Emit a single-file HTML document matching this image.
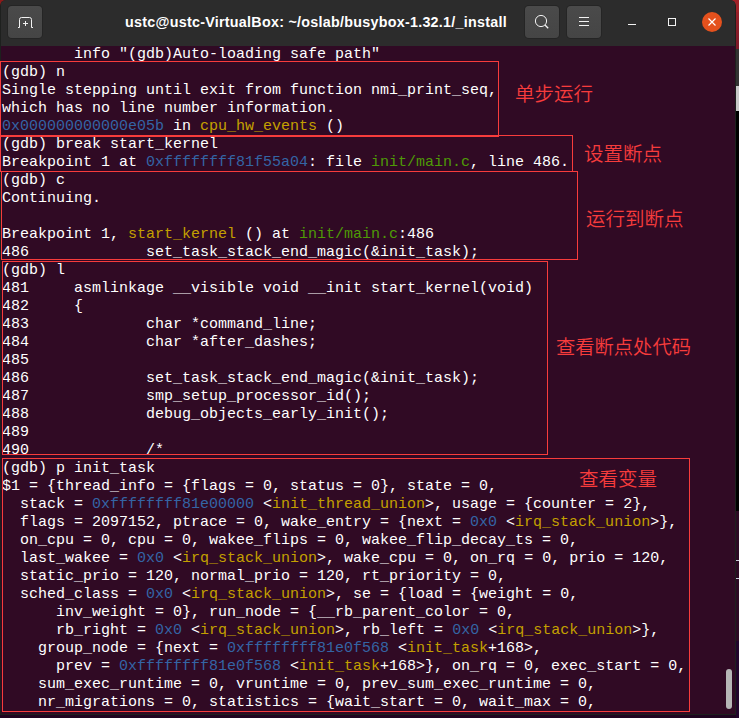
<!DOCTYPE html>
<html lang="zh"><head><meta charset="utf-8"><title>ustc@ustc-VirtualBox: ~/oslab/busybox-1.32.1/_install</title>
<style>
html,body{margin:0;padding:0;}
body{width:739px;height:718px;overflow:hidden;position:relative;background:#1e0420;font-family:"Liberation Sans","Noto Sans CJK SC",sans-serif;}
#strip{position:absolute;left:736px;top:0;width:3px;height:718px;background:#000;}
#strip i{position:absolute;left:0;width:3px;display:block;}
#win{position:absolute;left:0;top:0;width:736px;height:715px;background:#1e201e;border-radius:6px 6px 0 0;overflow:hidden;}
#tl{position:absolute;left:0;top:0;width:12px;height:12px;background:#8c1a1a;}
#tr{position:absolute;left:724px;top:0;width:15px;height:12px;background:#a02229;}
#hdr{position:absolute;left:1px;top:0;width:734px;height:46px;background:#2c2c2c;}
.btn{position:absolute;background:linear-gradient(#4a4a4a,#454545);border-radius:4px;box-shadow:0 0 0 1px #252525;}
#title{position:absolute;left:0;top:0;width:632px;height:44px;line-height:44px;text-align:center;color:#fff;font-weight:bold;font-size:14.3px;letter-spacing:0.27px;white-space:nowrap;}
#term{position:absolute;left:1px;top:46px;width:734px;height:668px;background:#300a24;overflow:hidden;}
.l{position:absolute;left:1px;height:18px;line-height:18px;white-space:pre;color:#fff;font-family:"Liberation Mono","DejaVu Sans Mono",monospace;font-size:15px;}
.b{color:#3465a4;}
.y{color:#c4a000;}
.g{color:#4e9a06;}
.box{position:absolute;border:1px solid #f73c3c;box-sizing:border-box;}
.cn{position:absolute;color:#f73c3c;font-weight:350;font-family:"Liberation Sans","Noto Sans CJK SC",sans-serif;font-size:19.5px;line-height:24px;white-space:nowrap;}
#sb{position:absolute;left:725px;top:623px;width:6px;height:40px;background:#b6b6b6;border-radius:3px;}
svg{position:absolute;overflow:visible;}
#ov{position:absolute;left:0;top:0;width:736px;height:715px;}
#hin{position:absolute;left:-1px;top:0;width:736px;height:46px;}
</style></head>
<body>
<div id="strip"><i style="top:0;height:49px;background:linear-gradient(#a02229,#7c1a2a)"></i><i style="top:49px;height:37px;background:#333"></i><i style="top:86px;height:25px;background:#c8c8c8"></i><i style="top:111px;height:400px;background:#000"></i><i style="top:511px;height:130px;background:#2d0a24"></i><i style="top:560px;height:1px;background:#c8c8d8"></i><i style="top:578px;height:1px;background:#c8c8d8"></i><i style="top:641px;height:77px;background:#22052c"></i></div>
<div id="tl"></div><div id="tr"></div>
<div id="win">
<div id="hdr"><div id="hin">
<div class="btn" style="left:8px;top:6px;width:34px;height:32px"></div>
<svg style="left:0;top:0" width="736" height="46" viewBox="0 0 736 46" fill="none" stroke="#f2f2f2" stroke-width="1">
<path d="M18 27.5 H19.5 V19.5 Q19.5 17.5 21.5 17.5 H29.5 Q31.5 17.5 31.5 19.5 V27.5 H33"/>
<path d="M23 23.5 H28 M25.5 21 V26"/>
</svg>
<div id="title">ustc@ustc-VirtualBox: ~/oslab/busybox-1.32.1/_install</div>
<div class="btn" style="left:525px;top:6px;width:34px;height:32px"></div>
<div class="btn" style="left:567px;top:6px;width:34px;height:32px"></div>
<svg style="left:0;top:0" width="736" height="46" viewBox="0 0 736 46" fill="none" stroke="#f2f2f2" stroke-width="1">
<circle cx="541" cy="21" r="5.6"/>
<path d="M545 25 L548.2 28.2" stroke-width="1.3"/>
<path d="M579 17.5 H589 M579 21.5 H589 M579 25.5 H589"/>
<path d="M628 24.5 H636"/>
<rect x="668.5" y="18.5" width="7" height="7"/>
</svg>
<div style="position:absolute;left:702px;top:12px;width:20px;height:20px;border-radius:50%;background:#e4511d"></div>
<svg style="left:0;top:0" width="736" height="46" viewBox="0 0 736 46" fill="none" stroke="#fff" stroke-width="1.2">
<path d="M708.5 18.5 L715.5 25.5 M715.5 18.5 L708.5 25.5"/>
</svg>
</div></div>
<div id="term">
<div class="l" style="top:0px">        info "(gdb)Auto-loading safe path"</div>
<div class="l" style="top:18px">(gdb) n</div>
<div class="l" style="top:36px">Single stepping until exit from function nmi_print_seq,</div>
<div class="l" style="top:54px">which has no line number information.</div>
<div class="l" style="top:72px"><span class="b">0x000000000000e05b</span> in <span class="y">cpu_hw_events</span> ()</div>
<div class="l" style="top:90px">(gdb) break start_kernel</div>
<div class="l" style="top:108px">Breakpoint 1 at <span class="b">0xffffffff81f55a04</span>: file <span class="g">init/main.c</span>, line 486.</div>
<div class="l" style="top:126px">(gdb) c</div>
<div class="l" style="top:144px">Continuing.</div>
<div class="l" style="top:162px"></div>
<div class="l" style="top:180px">Breakpoint 1, <span class="y">start_kernel</span> () at <span class="g">init/main.c</span>:486</div>
<div class="l" style="top:198px">486             set_task_stack_end_magic(&amp;init_task);</div>
<div class="l" style="top:216px">(gdb) l</div>
<div class="l" style="top:234px">481     asmlinkage __visible void __init start_kernel(void)</div>
<div class="l" style="top:252px">482     {</div>
<div class="l" style="top:270px">483             char *command_line;</div>
<div class="l" style="top:288px">484             char *after_dashes;</div>
<div class="l" style="top:306px">485</div>
<div class="l" style="top:324px">486             set_task_stack_end_magic(&amp;init_task);</div>
<div class="l" style="top:342px">487             smp_setup_processor_id();</div>
<div class="l" style="top:360px">488             debug_objects_early_init();</div>
<div class="l" style="top:378px">489</div>
<div class="l" style="top:396px">490             /*</div>
<div class="l" style="top:414px">(gdb) p init_task</div>
<div class="l" style="top:432px">$1 = {thread_info = {flags = 0, status = 0}, state = 0,</div>
<div class="l" style="top:450px">  stack = <span class="b">0xffffffff81e00000</span> &lt;<span class="y">init_thread_union</span>&gt;, usage = {counter = 2},</div>
<div class="l" style="top:468px">  flags = 2097152, ptrace = 0, wake_entry = {next = <span class="b">0x0</span> &lt;<span class="y">irq_stack_union</span>&gt;},</div>
<div class="l" style="top:486px">  on_cpu = 0, cpu = 0, wakee_flips = 0, wakee_flip_decay_ts = 0,</div>
<div class="l" style="top:504px">  last_wakee = <span class="b">0x0</span> &lt;<span class="y">irq_stack_union</span>&gt;, wake_cpu = 0, on_rq = 0, prio = 120,</div>
<div class="l" style="top:522px">  static_prio = 120, normal_prio = 120, rt_priority = 0,</div>
<div class="l" style="top:540px">  sched_class = <span class="b">0x0</span> &lt;<span class="y">irq_stack_union</span>&gt;, se = {load = {weight = 0,</div>
<div class="l" style="top:558px">      inv_weight = 0}, run_node = {__rb_parent_color = 0,</div>
<div class="l" style="top:576px">      rb_right = <span class="b">0x0</span> &lt;<span class="y">irq_stack_union</span>&gt;, rb_left = <span class="b">0x0</span> &lt;<span class="y">irq_stack_union</span>&gt;},</div>
<div class="l" style="top:594px">    group_node = {next = <span class="b">0xffffffff81e0f568</span> &lt;<span class="y">init_task</span>+168&gt;,</div>
<div class="l" style="top:612px">      prev = <span class="b">0xffffffff81e0f568</span> &lt;<span class="y">init_task</span>+168&gt;}, on_rq = 0, exec_start = 0,</div>
<div class="l" style="top:630px">    sum_exec_runtime = 0, vruntime = 0, prev_sum_exec_runtime = 0,</div>
<div class="l" style="top:648px">    nr_migrations = 0, statistics = {wait_start = 0, wait_max = 0,</div>

<div id="sb"></div>
</div>
<div id="ov">
<div class="box" style="left:0px;top:61px;width:499px;height:76px"></div>
<div class="box" style="left:0px;top:135px;width:573px;height:37px"></div>
<div class="box" style="left:1px;top:171px;width:577px;height:89px"></div>
<div class="box" style="left:2px;top:261px;width:546px;height:194px"></div>
<div class="box" style="left:2px;top:458px;width:688px;height:254px"></div>
<div class="cn" style="left:515px;top:82px">单步运行</div>
<div class="cn" style="left:584px;top:142px">设置断点</div>
<div class="cn" style="left:586px;top:207px">运行到断点</div>
<div class="cn" style="left:556px;top:336px;font-size:19.3px">查看断点处代码</div>
<div class="cn" style="left:579px;top:467px">查看变量</div>
</div>
</div>
</body></html>
